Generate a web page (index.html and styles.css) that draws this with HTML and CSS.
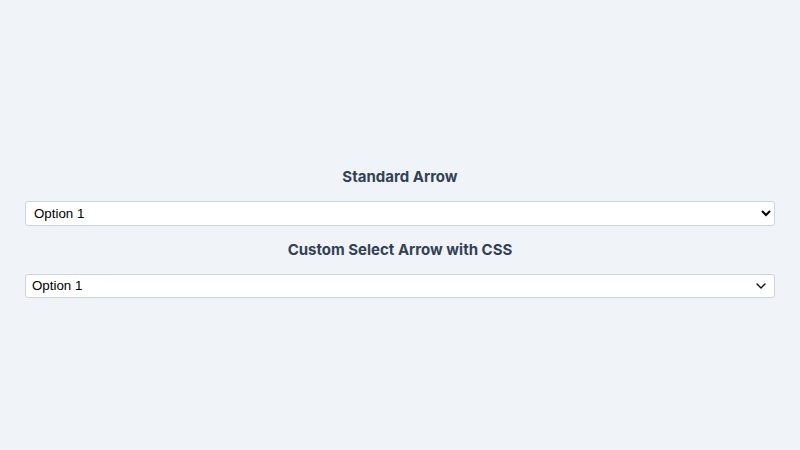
FILE: index.html
```html
<!DOCTYPE html>
<html lang="en">
<head>
<meta charset="utf-8">
<title>Select Arrow</title>
<link rel="stylesheet" href="styles.css">
</head>
<body>
<main class="page">
  <section class="demo">
    <h2 class="title">Standard Arrow</h2>
    <select class="select select-standard">
      <option>Option 1</option>
      <option>Option 2</option>
      <option>Option 3</option>
    </select>
    <h2 class="title">Custom Select Arrow with CSS</h2>
    <select class="select select-custom">
      <option>Option 1</option>
      <option>Option 2</option>
      <option>Option 3</option>
    </select>
  </section>
</main>
</body>
</html>
```

FILE: styles.css
```css
html, body {
  margin: 0;
  padding: 0;
}
body {
  background: #f0f4f8;
  font-family: Inter, "Liberation Sans", sans-serif;
  color: #2d3748;
}
.page {
  min-height: 100vh;
  display: flex;
  align-items: center;
  justify-content: center;
  box-sizing: border-box;
  padding: 0 25px;
}
.demo {
  width: 100%;
  display: flex;
  flex-direction: column;
  padding-top: 13px;
}
.title {
  text-align: center;
  font-size: 15px;
  font-weight: 700;
  margin: 0 0 14px;
  line-height: 21px;
  color: #334155;
}
.select {
  width: 100%;
  font-family: "Liberation Sans", Arial, sans-serif;
  font-size: 13.333px;
  color: #000;
  background-color: #fff;
  border: 1px solid #cbd5e0;
  border-radius: 3px;
  box-sizing: border-box;
  margin-bottom: 13px;
}
.select-standard {
  height: 25px;
  padding: 0 4px;
}
.select-custom {
  height: 24px;
  padding: 0 30px 0 6px;
  appearance: none;
  -webkit-appearance: none;
  background-image: url("data:image/svg+xml;utf8,<svg xmlns='http://www.w3.org/2000/svg' width='10' height='6' viewBox='0 0 10 6' fill='none' stroke='%23111' stroke-width='1.4' stroke-linecap='round' stroke-linejoin='round'><polyline points='1 1 5 5 9 1'/></svg>");
  background-repeat: no-repeat;
  background-position: right 8px center;
  background-size: 10px 6px;
  margin-bottom: 0;
}
```
